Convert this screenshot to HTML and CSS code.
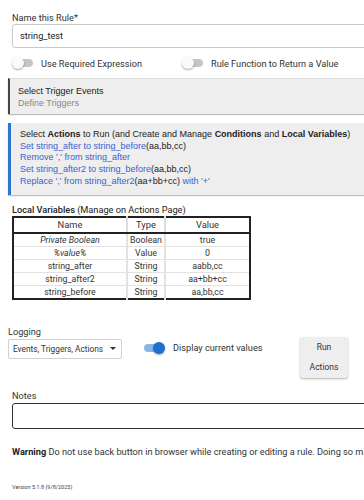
FILE: index.html
```html
<!DOCTYPE html>
<html>
<head>
<meta charset="utf-8">
<link rel="stylesheet" href="styles.css">
</head>
<body>
<div class="page">
  <div class="field">
    <div class="label">Name this Rule*</div>
    <div class="input">string_test</div>
  </div>

  <div class="toggles">
    <div class="toggle-item"><span class="switch"><span class="knob"></span></span><span>Use Required Expression</span></div>
    <div class="toggle-item"><span class="switch"><span class="knob"></span></span><span>Rule Function to Return a Value</span></div>
  </div>

  <div class="box trigger">
    <div>Select Trigger Events</div>
    <div class="muted">Define Triggers</div>
  </div>

  <div class="box actions">
    <div>Select <b>Actions</b> to Run (and Create and Manage <b>Conditions</b> and <b>Local Variables</b>)</div>
    <div><span class="link">Set string_after to string_before</span>(aa,bb,cc)</div>
    <div><span class="link">Remove ',' from string_after</span></div>
    <div><span class="link">Set string_after2 to string_before</span>(aa,bb,cc)</div>
    <div><span class="link">Replace ',' from string_after2</span>(aa+bb+cc) <span class="link">with '+'</span></div>
  </div>

  <div class="vars">
    <div class="vars-title"><b>Local Variables</b> (Manage on Actions Page)</div>
    <table class="vars-table">
      <thead>
        <tr><th class="c-name">Name</th><th class="c-type">Type</th><th class="c-value">Value</th></tr>
      </thead>
      <tbody>
        <tr><td><i>Private Boolean</i></td><td>Boolean</td><td>true</td></tr>
        <tr><td><i>%value%</i></td><td>Value</td><td>0</td></tr>
        <tr><td>string_after</td><td>String</td><td>aabb,cc</td></tr>
        <tr><td>string_after2</td><td>String</td><td>aa+bb+cc</td></tr>
        <tr><td>string_before</td><td>String</td><td>aa,bb,cc</td></tr>
      </tbody>
    </table>
  </div>

  <div class="logging-row">
    <div class="logging">
      <div class="label">Logging</div>
      <div class="select"><span>Events, Triggers, Actions</span><span class="caret"></span></div>
    </div>
    <div class="toggle-item on"><span class="switch"><span class="knob"></span></span><span>Display current values</span></div>
    <div class="run-btn"><span>Run</span><span>Actions</span></div>
  </div>

  <div class="field notes">
    <div class="label">Notes</div>
    <div class="textarea"></div>
  </div>

  <div class="warning"><b>Warning</b> Do not use back button in browser while creating or editing a rule. Doing so may cause unexpected results.</div>

  <div class="version">Version 5.1.8 (9/8/2025)</div>
</div>
</body>
</html>
```
FILE: styles.css
```css
html, body {
  margin: 0;
  padding: 0;
  background: #fff;
}
body {
  width: 364px;
  height: 500px;
  overflow: hidden;
  font-family: Roboto, "Noto Sans", sans-serif;
  color: #333;
}
.page {
  width: 440px;
  padding: 11px 0 0 8px;
}
.field {
  margin-left: 4px;
}
.label {
  font-size: 9.2px;
  line-height: 13px;
  color: #333;
}
.input {
  height: 24px;
  box-sizing: border-box;
  border: 1px solid #c8c8c8;
  border-radius: 3px;
  padding-left: 7px;
  font-size: 9.2px;
  line-height: 22px;
  color: #222;
}
.toggles {
  margin: 8px 0 0 4px;
  display: grid;
  grid-template-columns: 170px 200px;
}
.toggle-item {
  display: flex;
  align-items: center;
  height: 14px;
  font-size: 9.2px;
  color: #333;
  gap: 8px;
}
.switch {
  position: relative;
  width: 21px;
  height: 14px;
  flex: none;
}
.switch::before {
  content: "";
  position: absolute;
  left: 3px;
  right: 0;
  top: 3px;
  height: 8px;
  border-radius: 4px;
  background: #c6c6c6;
}
.knob {
  position: absolute;
  left: 0;
  top: 1px;
  width: 12px;
  height: 12px;
  border-radius: 50%;
  background: #fafafa;
  box-shadow: 0 1px 2px rgba(0,0,0,0.35);
}
.toggle-item.on .switch::before {
  left: 0;
  right: 3px;
  background: #8db5e8;
}
.toggle-item.on .knob {
  left: auto;
  right: 0;
  background: #1b6fd1;
}
.box {
  font-family: "Liberation Sans", Arial, sans-serif;
  font-size: 9px;
  background: #eeeeee;
  color: #222;
}
.trigger {
  margin-top: 8px;
  height: 36px;
  box-sizing: border-box;
  padding: 6px 8px;
  line-height: 12px;
  border-left: 2px solid #444;
  border-top: 1px solid #dcdcdc;
  box-shadow: 0 1px 1px rgba(0,0,0,0.25);
}
.muted {
  color: #8a8a8a;
}
.actions {
  margin-top: 9px;
  padding: 6px 10px 7px 9px;
  line-height: 11.7px;
  border-left: 3px solid #2a76d2;
  box-shadow: 0 1px 1px rgba(0,0,0,0.25);
}
.actions b {
  font-weight: bold;
}
.link {
  color: #3a62cf;
}
.vars {
  margin: 9px 0 0 4px;
}
.vars-title {
  font-size: 9.2px;
  line-height: 12px;
  color: #222;
}
.vars-title b {
  font-weight: 500;
}
.vars-table {
  border-collapse: collapse;
  border: 2px solid #222;
  font-size: 8.8px;
  color: #333;
  text-align: center;
}
.vars-table th {
  font-weight: normal;
  height: 14px;
  padding: 0;
  line-height: 14px;
  font-size: 9.3px;
  border-bottom: 2px solid #222;
  border-left: 2px solid #ddd;
}
.vars-table td {
  padding: 0;
  height: 12px;
  line-height: 12px;
  border-bottom: 1px solid #e2e2e2;
  border-left: 2px solid #e2e2e2;
}
.vars-table th:first-child, .vars-table td:first-child {
  border-left: none;
}
.c-name { width: 112px; }
.c-type { width: 36px; }
.c-value { width: 83px; }
.logging-row {
  margin-top: 26px;
  display: grid;
  grid-template-columns: 114px 134px 48px;
  column-gap: 22px;
  align-items: start;
}
.logging .label {
  line-height: 12px;
  margin-bottom: 1px;
}
.select {
  height: 20px;
  box-sizing: border-box;
  border: 1px solid #d0d0d0;
  border-radius: 2px;
  display: flex;
  align-items: center;
  justify-content: space-between;
  padding: 0 5px 0 4px;
  font-size: 8.3px;
  color: #333;
}
.caret {
  width: 0;
  height: 0;
  border-left: 3px solid transparent;
  border-right: 3px solid transparent;
  border-top: 3px solid #333;
}
.logging-row .toggle-item {
  margin-top: 15px;
}
.run-btn {
  margin-top: 11px;
  height: 41px;
  background: #eeeeee;
  box-shadow: 0 1px 2px rgba(0,0,0,0.3);
  border-radius: 2px;
  display: flex;
  flex-direction: column;
  align-items: center;
  justify-content: space-between;
  padding: 4px 0 5px;
  box-sizing: border-box;
  font-size: 8.5px;
  line-height: 12px;
  color: #333;
}
.notes {
  margin-top: 12px;
}
.notes .label {
  line-height: 12px;
  margin-bottom: 1px;
}
.textarea {
  height: 26px;
  box-sizing: border-box;
  border: 1.5px solid #333;
  border-radius: 3px;
}
.warning {
  margin: 16px 0 0 4px;
  font-size: 9.2px;
  line-height: 13px;
  white-space: nowrap;
  color: #333;
}
.warning b {
  font-weight: bold;
  color: #222;
}
.version {
  margin: 25px 0 0 4px;
  font-size: 5.5px;
  line-height: 8px;
  color: #444;
}
```
